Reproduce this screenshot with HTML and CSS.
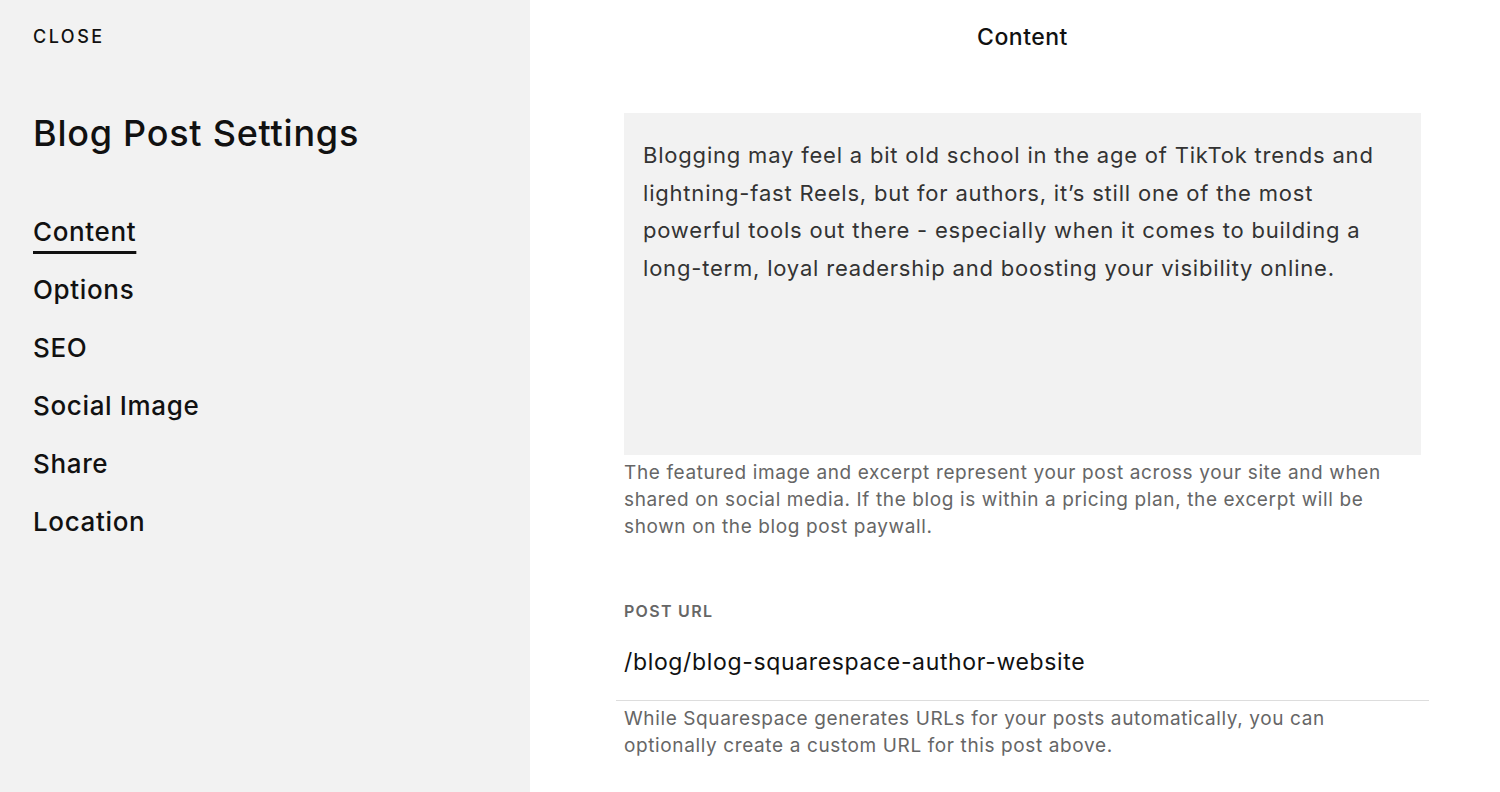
FILE: index.html
```html
<!DOCTYPE html>
<html lang="en">
<head>
<meta charset="utf-8">
<title>Blog Post Settings</title>
<link rel="stylesheet" href="styles.css">
</head>
<body>
<div class="app">
  <aside class="sidebar">
    <div class="close">CLOSE</div>
    <h1 class="title">Blog Post Settings</h1>
    <nav class="nav">
      <div class="nav-item"><span class="active">Content</span></div>
      <div class="nav-item">Options</div>
      <div class="nav-item">SEO</div>
      <div class="nav-item">Social Image</div>
      <div class="nav-item">Share</div>
      <div class="nav-item">Location</div>
    </nav>
  </aside>
  <main class="main">
    <div class="column">
      <div class="panel-title">Content</div>
      <div class="excerpt">Blogging may feel a bit old school in the age of TikTok trends and lightning-fast Reels, but for authors, it’s still one of the most powerful tools out there - especially when it comes to building a long-term, loyal readership and boosting your visibility online.</div>
      <p class="help">The featured image and excerpt represent your post across your site and when shared on social media. If the blog is within a pricing plan, the excerpt will be shown on the blog post paywall.</p>
      <div class="label">POST URL</div>
      <div class="url-field">/blog/blog-squarespace-author-website</div>
      <p class="help help-url">While Squarespace generates URLs for your posts automatically, you can optionally create a custom URL for this post above.</p>
    </div>
  </main>
</div>
</body>
</html>
```
FILE: styles.css
```css
html, body {
  margin: 0;
  padding: 0;
}
body {
  font-family: Inter, "Noto Sans", "Liberation Sans", sans-serif;
  color: #111;
  background: #fff;
}
.app {
  display: flex;
  height: 792px;
  overflow: hidden;
}
.sidebar {
  width: 530px;
  flex: none;
  background: #f2f2f2;
  padding: 25px 33px 0;
  box-sizing: border-box;
}
.close {
  font-size: 18px;
  line-height: 24px;
  font-weight: 500;
  letter-spacing: 2.5px;
  color: #111;
}
.title {
  margin: 62px 0 0;
  font-size: 36px;
  line-height: 44px;
  font-weight: 500;
  letter-spacing: 0.75px;
  color: #111;
}
.nav {
  margin-top: 60px;
  display: flex;
  flex-direction: column;
  gap: 24px;
}
.nav-item {
  font-size: 26px;
  line-height: 34px;
  font-weight: 500;
  letter-spacing: 0.65px;
  color: #111;
}
.active {
  text-decoration: underline;
  text-decoration-thickness: 3px;
  text-underline-offset: 10px;
}
.main {
  flex: 1;
  padding: 22px 0 0 94px;
}
.column {
  width: 797px;
}
.panel-title {
  text-align: center;
  font-size: 23px;
  line-height: 30px;
  font-weight: 500;
  letter-spacing: 0.5px;
  color: #111;
}
.excerpt {
  margin-top: 61px;
  height: 342px;
  box-sizing: border-box;
  background: #f2f2f2;
  padding: 24px 19px;
  font-size: 22px;
  line-height: 37.5px;
  letter-spacing: 0.8px;
  color: #333;
}
.help {
  margin: 3.5px 0 0;
  font-size: 19px;
  line-height: 27px;
  letter-spacing: 0.62px;
  color: #666;
}
.label {
  margin-top: 61.5px;
  font-size: 16px;
  line-height: 20px;
  font-weight: 600;
  letter-spacing: 1.3px;
  color: #666;
}
.url-field {
  margin: 26px -8px 0;
  padding: 0 8px 23px;
  border-bottom: 1px solid #ddd;
  font-size: 23px;
  line-height: 30px;
  letter-spacing: 0.65px;
  color: #111;
}
.help-url {
  margin-top: 3.5px;
}
```
